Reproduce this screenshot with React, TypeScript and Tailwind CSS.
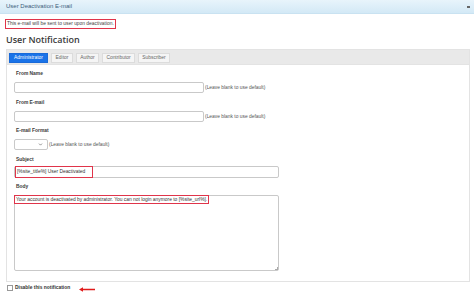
import { ChevronDown } from 'lucide-react'

const font = { fontFamily: '"Liberation Sans", Arial, sans-serif' }

const hint = <span className="ml-[1px] text-[4.9px] text-[#555] whitespace-nowrap">(Leave blank to use default)</span>

function Label({ text, className }: { text: string; className: string }) {
  return <div className={'h-[8px] flex items-center ml-[2px] text-[4.9px] font-bold text-[#3a3a3a] ' + className}>{text}</div>
}

export default function App() {
  const tabs = [
    { name: 'Administrator', w: 'w-[39px]' },
    { name: 'Editor', w: 'w-[22px]' },
    { name: 'Author', w: 'w-[23px]' },
    { name: 'Contributor', w: 'w-[33px]' },
    { name: 'Subscriber', w: 'w-[32px]' },
  ]
  return (
    <div className="w-[474px] h-[293px] bg-white overflow-hidden" style={font}>
      <div className="h-[14px] flex items-center justify-between pl-[6px] pr-[4px] bg-gradient-to-b from-[#e8f4fb] to-[#d3e9f6] border-b border-[#c9e2f1]">
        <span className="text-[6px] text-[#3d5d7a]">User Deactivation E-mail</span>
        <span className="w-[3px] h-[2px] bg-[#666]" />
      </div>

      <div className="ml-[5px] mt-[5px] w-fit h-[10px] border border-[#e0344a] flex items-center px-[1px]">
        <span className="text-[4.9px] text-[#444] whitespace-nowrap">This e-mail will be sent to user upon deactivation.</span>
      </div>

      <h2
        className="ml-[6px] mt-[4px] h-[13px] leading-[13px] text-[9px] font-semibold text-[#3a3a3a]"
        style={{ fontFamily: '"Open Sans", "Liberation Sans", sans-serif' }}
      >
        User Notification
      </h2>

      <div className="ml-[6px] mt-[3px] w-[464px] border border-[#e3e3e3] flex flex-col">
        <div className="h-[15px] bg-[#e9e9e9] flex items-end gap-[3px] pl-[2px] border-b border-[#e3e3e3]">
          {tabs.map((t, i) => (
            <div
              key={t.name}
              className={
                (i === 0
                  ? 'bg-[#1a73e8] text-white border-[#1a6ad8] '
                  : 'bg-[#f5f5f5] text-[#666] border-[#dcdcdc] ') +
                t.w +
                ' h-[10px] mb-[1px] border flex items-center justify-center text-[4.9px] whitespace-nowrap'
              }
            >
              {t.name}
            </div>
          ))}
        </div>

        <div className="flex flex-col pl-[7px] pt-[5px] pb-[10px]">
          <Label text="From Name" className="" />
          <div className="flex items-center mt-[4px]">
            <div className="w-[190px] h-[11px] border border-[#c9c9c9] rounded-[2px]" />
            {hint}
          </div>

          <Label text="From E-mail" className="mt-[6px]" />
          <div className="flex items-center mt-[4px]">
            <div className="w-[190px] h-[11px] border border-[#c9c9c9] rounded-[2px]" />
            {hint}
          </div>

          <Label text="E-mail Format" className="mt-[5px]" />
          <div className="flex items-center mt-[4px]">
            <div className="w-[34px] h-[11px] border border-[#c9c9c9] rounded-[2px] flex items-center justify-end pr-[4px]">
              <ChevronDown size={5} strokeWidth={3} className="text-[#555]" />
            </div>
            {hint}
          </div>

          <Label text="Subject" className="mt-[6px]" />
          <div className="relative w-[265px] h-[12px] border border-[#c9c9c9] rounded-[2px] mt-[2px]">
            <div className="absolute left-[0px] top-[-1px] w-[78px] h-[12px] border border-[#e0344a] flex items-center px-[1px]">
              <span className="text-[4.9px] text-[#333] whitespace-nowrap">[%site_title%] User Deactivated</span>
            </div>
          </div>

          <Label text="Body" className="mt-[5px]" />
          <div className="relative w-[265px] h-[76px] border border-[#c9c9c9] rounded-[2px] mt-[4px]">
            <div className="absolute left-[-1px] top-[-1px] w-fit h-[9px] border border-[#e0344a] flex items-center px-[1px]">
              <span className="text-[4.9px] text-[#333] whitespace-nowrap">
                Your account is deactivated by administrator. You can not login anymore to [%site_url%].
              </span>
            </div>
            <div className="absolute right-0 bottom-0 w-[3px] h-[3px] border-r border-b border-[#aaa]" />
          </div>
        </div>
      </div>

      <div className="ml-[7px] mt-[2px] h-[8px] flex items-center">
        <div className="w-[6px] h-[6px] border border-[#999] bg-white" />
        <span className="ml-[2px] text-[4.9px] font-bold text-[#333] whitespace-nowrap">Disable this notification</span>
        <svg width="16" height="5" viewBox="0 0 16 5" className="ml-[9px] mt-[2px]">
          <path d="M0 2.5 L4 0.3 L4 1.7 L16 1.7 L16 3.3 L4 3.3 L4 4.7 Z" fill="#e01b1b" />
        </svg>
      </div>
    </div>
  )
}
